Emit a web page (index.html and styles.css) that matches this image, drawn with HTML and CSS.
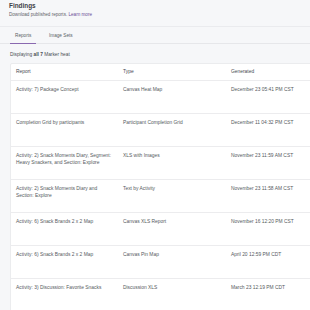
FILE: index.html
```html
<!DOCTYPE html>
<html>
<head>
<meta charset="utf-8">
<link rel="stylesheet" href="styles.css">
</head>
<body>
<header class="page-header">
  <h1 class="title">Findings</h1>
  <p class="subtitle">Download published reports. <a class="link" href="#">Learn more</a></p>
</header>
<nav class="tabs">
  <span class="tab active">Reports</span>
  <span class="tab">Image Sets</span>
</nav>
<main class="content">
  <p class="count">Displaying <b>all 7</b> Marker heat</p>
  <div class="card">
    <div class="row head">
      <div class="cell">Report</div>
      <div class="cell">Type</div>
      <div class="cell">Generated</div>
    </div>
    <div class="row">
      <div class="cell">Activity: 7) Package Concept</div>
      <div class="cell">Canvas Heat Map</div>
      <div class="cell">December 23 05:41 PM CST</div>
    </div>
    <div class="row">
      <div class="cell">Completion Grid by participants</div>
      <div class="cell">Participant Completion Grid</div>
      <div class="cell">December 11 04:32 PM CST</div>
    </div>
    <div class="row">
      <div class="cell">Activity: 2) Snack Moments Diary, Segment: Heavy Snackers, and Section: Explore</div>
      <div class="cell">XLS with Images</div>
      <div class="cell">November 23 11:59 AM CST</div>
    </div>
    <div class="row">
      <div class="cell">Activity: 2) Snack Moments Diary and Section: Explore</div>
      <div class="cell">Text by Activity</div>
      <div class="cell">November 23 11:58 AM CST</div>
    </div>
    <div class="row">
      <div class="cell">Activity: 6) Snack Brands 2 x 2 Map</div>
      <div class="cell">Canvas XLS Report</div>
      <div class="cell">November 16 12:20 PM CST</div>
    </div>
    <div class="row">
      <div class="cell">Activity: 6) Snack Brands 2 x 2 Map</div>
      <div class="cell">Canvas Pin Map</div>
      <div class="cell">April 20 12:59 PM CDT</div>
    </div>
    <div class="row">
      <div class="cell">Activity: 3) Discussion: Favorite Snacks</div>
      <div class="cell">Discussion XLS</div>
      <div class="cell">March 23 12:19 PM CDT</div>
    </div>
  </div>
</main>
</body>
</html>
```
FILE: styles.css
```css
html, body {
  margin: 0;
  padding: 0;
  overflow: hidden;
}
body {
  background: #f6f7f9;
  font-family: "Liberation Sans", Arial, sans-serif;
  color: #555a60;
  width: 310px;
  height: 310px;
}
.page-header {
  height: 26px;
  padding: 0 9px;
  border-bottom: 1px solid #eaebee;
  box-sizing: content-box;
}
.title {
  margin: 0;
  padding-top: 2px;
  font-size: 6.4px;
  line-height: 8px;
  font-weight: bold;
  color: #3d4147;
}
.subtitle {
  margin: 1.5px 0 0;
  font-size: 4.6px;
  line-height: 6px;
  color: #5f646a;
}
.link {
  color: #6b4f98;
  text-decoration: none;
}
.tabs {
  display: flex;
  gap: 7.5px;
  height: 16px;
  padding: 0 10px;
  border-bottom: 1px solid #e6e7ea;
}
.tab {
  display: flex;
  align-items: center;
  padding: 0 5px;
  font-size: 4.7px;
  color: #5a5f66;
  border-bottom: 1.5px solid transparent;
  margin-bottom: -1px;
}
.tab.active {
  border-bottom-color: #8a69b0;
}
.content {
  padding: 0 0 0 10px;
  overflow: hidden;
}
.count {
  margin: 7.5px 0 5px;
  font-size: 4.8px;
  line-height: 6px;
  color: #4a4f55;
}
.count b {
  font-weight: bold;
}
.card {
  width: 340px;
  background: #fff;
  border: 1px solid #ebecee;
  border-radius: 2px;
}
.row {
  display: grid;
  grid-template-columns: 107px 108px 1fr;
  height: 33px;
  border-top: 1px solid #ececee;
  box-sizing: border-box;
  font-size: 4.9px;
  line-height: 7px;
}
.row .cell {
  padding: 5px 5px 0;
}
.row.head {
  height: 16px;
  border-top: none;
  color: #464a50;
}
.row.head .cell {
  padding-top: 4.5px;
}
```
